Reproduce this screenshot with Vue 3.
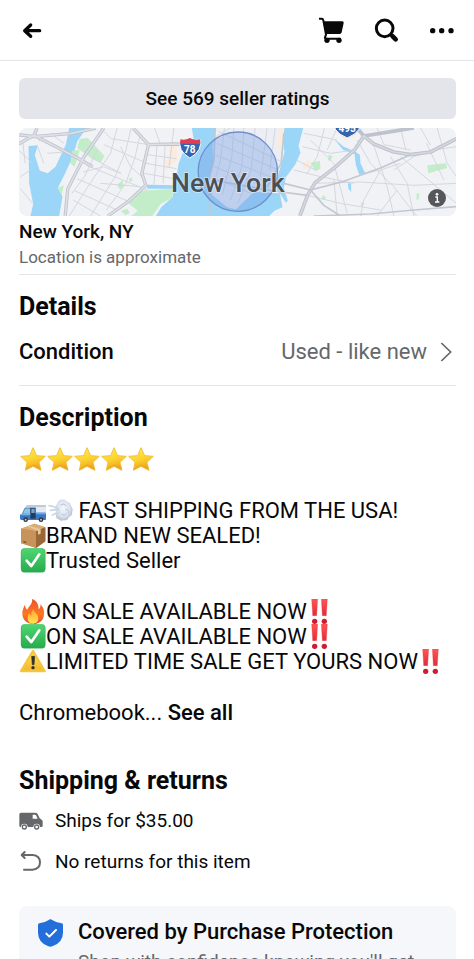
<script setup>
import { ref } from 'vue'

const description = ref([
  [{ before: ['star', 'star', 'star', 'star', 'star'], text: '' }],
  [
    { before: ['truck', 'dash'], text: ' FAST SHIPPING FROM THE USA!' },
    { before: ['package'], text: 'BRAND NEW SEALED!' },
    { before: ['check'], text: 'Trusted Seller' }
  ],
  [
    { before: ['fire'], text: 'ON SALE AVAILABLE NOW', after: ['bang'] },
    { before: ['check'], text: 'ON SALE AVAILABLE NOW', after: ['bang'] },
    { before: ['warning'], text: 'LIMITED TIME SALE GET YOURS NOW', after: ['bang'] }
  ]
])
</script>

<template>
  <div class="screen">
    <!-- emoji sheet -->
    <svg class="sheet" width="0" height="0" aria-hidden="true">
      <defs>
        <linearGradient id="g-star" x1="0" y1="0" x2="0.3" y2="1">
          <stop offset="0" stop-color="#fff05a" /><stop offset="0.6" stop-color="#fcd22f" /><stop offset="1" stop-color="#f0a51e" />
        </linearGradient>
        <linearGradient id="g-check" x1="0" y1="0" x2="0" y2="1">
          <stop offset="0" stop-color="#4fd672" /><stop offset="1" stop-color="#27ab4c" />
        </linearGradient>
        <linearGradient id="g-fire" x1="0" y1="0" x2="0" y2="1">
          <stop offset="0" stop-color="#f0502c" /><stop offset="0.6" stop-color="#fb7a24" /><stop offset="1" stop-color="#ee4a2a" />
        </linearGradient>
        <linearGradient id="g-flame" x1="0" y1="0" x2="0" y2="1">
          <stop offset="0" stop-color="#ffa52d" /><stop offset="1" stop-color="#ffe552" />
        </linearGradient>
        <linearGradient id="g-warn" x1="0" y1="0" x2="0" y2="1">
          <stop offset="0" stop-color="#ffe45a" /><stop offset="1" stop-color="#f4b62c" />
        </linearGradient>
        <linearGradient id="g-bang" x1="0" y1="0" x2="0" y2="1">
          <stop offset="0" stop-color="#ff5555" /><stop offset="1" stop-color="#e02c3a" />
        </linearGradient>
        <radialGradient id="g-dash" cx="0.45" cy="0.4" r="0.6">
          <stop offset="0" stop-color="#f3f6fb" /><stop offset="0.7" stop-color="#d8e0ed" /><stop offset="1" stop-color="#b3bfd3" />
        </radialGradient>
      </defs>
      <symbol id="e-star" viewBox="0 0 81 75">
        <path d="M42 2 53 26 79 28 60 46 66 70 42 58 19 70 24 46 5 28 32 26Z" fill="url(#g-star)" stroke="#f2c23c" stroke-width="3" stroke-linejoin="round" />
        <path d="M19 70 42 58 66 70 63 60 43 52 23 62Z" fill="#e89a22" opacity=".4" />
      </symbol>
      <symbol id="e-truck" viewBox="0 0 81 75">
        <path d="M24 21h54q3 0 3 3v26H18l2-25q1-4 4-4Z" fill="#e3eaf2" />
        <path d="M24 21h54q3 0 3 3v3H20Z" fill="#bccbdc" />
        <path d="M18 30h17v17H10Z" fill="#86c8e8" stroke="#405c7d" stroke-width="2" />
        <path d="M3 50l12-4h66v17q0 3-3 3H7q-4 0-4-5Z" fill="#3978c3" />
        <path d="M3 49l13-4h20v7H4Z" fill="#7bb2e4" />
        <path d="M34 29h16v33H34Z" fill="#263a5b" />
        <path d="M37 32h10v13H37Z" fill="#6aa8d5" />
        <path d="M51 43h29v6H51Z" fill="#6ca7e1" />
        <circle cx="20" cy="65" r="7" fill="#2e3743" /><circle cx="20" cy="65" r="3" fill="#b6c0cb" />
        <circle cx="66" cy="65" r="7" fill="#2e3743" /><circle cx="66" cy="65" r="3" fill="#b6c0cb" />
      </symbol>
      <symbol id="e-dash" viewBox="0 0 81 75">
        <path d="M34 18q3-13 16-13 10 0 14 8 9 1 10 11 8 8 4 18 1 11-9 14-5 13-17 10-7 5-13-2-10-2-8-12-4-5 0-12-6-12 3-22Z" fill="url(#g-dash)" stroke="#b4bfd1" stroke-width="1" />
        <path d="M9 23q14 1 28 9M13 37q12-3 26 0M19 51q9-6 21-6" fill="none" stroke="#ccd6e5" stroke-width="5" stroke-linecap="round" />
        <path d="M45 20q10-6 15 3M59 34q10 0 9 11M48 50q8 5 13-3" fill="none" stroke="#b9c5d8" stroke-width="3" stroke-linecap="round" />
      </symbol>
      <symbol id="e-package" viewBox="0 0 81 75">
        <path d="M6 17 46 2 79 13v42L52 75 6 60Z" fill="#b9834d" />
        <path d="M6 17 46 2 79 13 51 25Z" fill="#dbad76" />
        <path d="M51 25 79 13v42L51 75Z" fill="#9a6838" />
        <path d="M6 17 51 25V75L6 61Z" fill="#c8925b" />
        <path d="M24 10 31 8 65 19v13l-8 3V23Z" fill="#e9c797" />
        <path d="M13 53l9 3v5l-9-3Z" fill="#7a4f29" />
      </symbol>
      <symbol id="e-check" viewBox="0 0 81 75">
        <rect x="6" y="1" width="73" height="72" rx="11" fill="url(#g-check)" stroke="#2ba64d" stroke-width="1" />
        <path d="M23 38 37 54 61 19" fill="none" stroke="#fff" stroke-width="8" stroke-linecap="round" stroke-linejoin="round" />
      </symbol>
      <symbol id="e-fire" viewBox="0 0 81 75">
        <path d="M39 0C55 6 59 18 59 31 64 28 65 21 64 16 76 27 77 41 74 53 70 68 57 75 42 75 25 75 11 64 10 46 9 34 14 26 17 18 20 25 20 29 25 32 29 21 42 15 39 0Z" fill="url(#g-fire)" />
        <path d="M44 30C43 40 57 43 58 57 58 68 51 74 42 74 31 74 25 66 26 57 26 51 29 47 30 43 33 46 34 49 37 50 36 42 39 35 44 30Z" fill="url(#g-flame)" />
      </symbol>
      <symbol id="e-warning" viewBox="0 0 81 75">
        <path d="M42 6 77 66H6Z" fill="url(#g-warn)" stroke="#f5c53e" stroke-width="7" stroke-linejoin="round" />
        <path d="M38 22h9l-2 25h-5Z" fill="#30302e" stroke="#30302e" stroke-width="2" stroke-linejoin="round" />
        <circle cx="42" cy="56" r="5" fill="#30302e" />
      </symbol>
      <symbol id="e-bang" viewBox="0 0 81 75">
        <path d="M14 0h18l-3 50H17ZM43 0h18l-3 50H46Z" fill="url(#g-bang)" stroke="#ef4650" stroke-width="1" stroke-linejoin="round" />
        <circle cx="23" cy="67" r="8" fill="#cf1c30" /><circle cx="52" cy="67" r="8" fill="#cf1c30" />
      </symbol>
    </svg>

    <header class="topbar">
      <button class="icon-btn" aria-label="Back">
        <svg viewBox="0 0 78 78"><path d="M62 41H18M35 24 17 41l18 17" fill="none" stroke="currentColor" stroke-width="10" stroke-linecap="round" stroke-linejoin="round" /></svg>
      </button>
      <div class="actions">
        <button class="icon-btn" aria-label="Cart">
          <svg viewBox="0 0 78 78">
            <path d="M2 5h6q4 0 5 5l8 43-3 8q-1 4 4 4h41" fill="none" stroke="currentColor" stroke-width="6" stroke-linecap="round" stroke-linejoin="round" />
            <path d="M12 13h58q5 0 4 5l-6 28q-1 5-6 5H20Z" fill="currentColor" />
            <circle cx="24" cy="70" r="8" fill="currentColor" /><circle cx="60" cy="70" r="8" fill="currentColor" />
          </svg>
        </button>
        <button class="icon-btn" aria-label="Search">
          <svg viewBox="0 0 78 78">
            <circle cx="32" cy="34" r="25" fill="none" stroke="currentColor" stroke-width="9" />
            <path d="M50 53l5 5" stroke="currentColor" stroke-width="9" />
            <path d="M56 58l9 9" stroke="currentColor" stroke-width="14" stroke-linecap="round" />
          </svg>
        </button>
        <button class="icon-btn" aria-label="More">
          <svg viewBox="0 0 78 78" fill="currentColor"><circle cx="11" cy="41" r="8" /><circle cx="38" cy="41" r="8" /><circle cx="66" cy="41" r="8" /></svg>
        </button>
      </div>
    </header>

    <main class="content">
      <button class="ratings">See 569 seller ratings</button>

      <section class="location">
        <div class="map">
          <svg viewBox="54 24 1314 264" preserveAspectRatio="xMidYMid slice" role="img" aria-label="Map of New York">
            <rect x="54" y="24" width="1314" height="264" fill="#f1f2f6" />
            <!-- water -->
            <g fill="#9bd5f7">
              <path d="M84 78 112 76 103 106 118 152 142 160 165 140 196 74 206 24H258L231 62 214 116 194 160 172 204 186 230 176 288H90L98 252 86 190Z" />
              <path d="M574 24H648L636 80 640 132 622 192 634 216 700 256 760 216 838 220 846 262 822 272 806 288H466L482 262 516 232 522 206 440 206 440 194 524 196 534 132 546 100 584 90Z" />
              <path d="M842 24H908L894 78 900 98 884 134 856 172 850 204 862 242 856 248 838 220 822 200 840 140 852 96Z" />
              <path d="M1000 56 1030 80 1062 94 1078 104 1080 130 1094 160 1076 164 1066 134 1062 102 1028 90ZM1042 190l10 0 0 26-8-10Z" />
            </g>
            <path d="M622 192 640 130 640 80 648 24H842L850 90 836 150 806 204 760 216 706 268 680 262 636 226Z" fill="#eceef4" />
            <!-- parks and blocks -->
            <g fill="#c3ecc8">
              <path d="M238 56 262 54 312 108 300 128 270 112 230 84Z" />
              <path d="M418 212 522 206 514 234 480 252 456 288H392L412 272 386 252 400 226Z" />
              <path d="M214 92 238 90 222 140 210 130ZM170 204l20-8-6 28ZM362 272l18-6 8 12-14 8Z" />
              <path d="M350 194l16-14 4 20-12 8ZM384 178l10-6 2 10-8 4Z" />
              <path d="M930 128 958 122 960 146 944 154ZM984 104l12 4-6 16-8-4ZM1280 136 1336 130 1340 144 1310 152 1284 160ZM1248 222l8-4 0 18-8 4ZM966 226l10 4-2 8-10-2ZM1084 246l8 4-8 10-4-4Z" />
            </g>
            <path d="M506 72h24v50l-36 28-6-24 16-8ZM838 24h14l-10 70-12-22ZM906 130l20-12 6 20-24 14ZM1016 40l44-10 4 22-32 6Z" fill="#faebdc" />
            <!-- minor streets -->
            <g fill="none" stroke="#d3d7df" stroke-width="3">
              <path d="M258 136 440 210M230 176 392 248M310 74 440 130M270 112 362 160M222 212 350 270M300 24 332 56 444 74M218 240 300 288M350 24 330 100 262 200 206 288M392 24 376 92 344 170 270 288M420 40 404 110 376 190 318 270M290 90 252 170 214 220M440 104 528 116M436 130 528 146M430 160 520 176M470 74 460 196M494 70 488 190M520 24 506 140M462 24 480 74M360 80 390 140 424 170M248 156 310 140 360 160M300 190 420 200" />
              <path d="M54 90 96 130M60 206 96 250M110 76 130 130M140 100 190 96M60 170 90 150M150 40 190 70M66 60 74 130M102 30 118 64" />
              <path d="M654 34 700 56 840 124M648 70 834 150M642 104 824 176M640 140 806 204M634 172 752 220M672 24 660 120 638 200M700 24 694 110 666 224M730 24 724 140 690 240M764 24 752 150 712 250M800 24 780 170M824 24 808 150M646 50 690 24M656 188 698 150" />
              <path d="M906 80 990 100 1064 90M880 150 960 170 1060 190M930 60 1000 130 1040 280M972 24 950 110 920 160M1010 24 980 90M1070 60 1110 130 1180 200 1248 288M1120 76 1160 200 1180 288M1170 110 1220 190 1240 288M1200 110 1368 250M1278 70 1330 180M1180 150 1240 110 1300 90 1368 80M940 190 1080 186 1240 196 1368 190M920 226 1020 250 1140 270M1000 176 1010 288M1094 160 1140 150 1200 130M1130 24 1150 74 1230 90M1200 24 1216 90M1260 24 1290 76M1310 24 1340 130 1368 170M1140 150 1090 240 1080 288M1190 210 1130 288M910 40 1010 60M888 120 944 150" />
            </g>
            <!-- main roads -->
            <g fill="none" stroke-linejoin="round">
              <path d="M54 44 102 50 212 40 286 24M54 72 100 46 110 24M100 46 220 108 276 140M310 24 252 108 202 206 194 288M398 24 444 74 526 72 576 76M444 74 424 160 436 196 384 244 322 288" stroke="#bdc2cc" stroke-width="10" />
              <path d="M54 44 102 50 212 40 286 24M54 72 100 46 110 24M100 46 220 108 276 140M310 24 252 108 202 206 194 288M398 24 444 74 526 72 576 76M444 74 424 160 436 196 384 244 322 288" stroke="#dde0e6" stroke-width="5" />
              <path d="M898 288 922 224 944 188 1006 140 1064 88 1090 48 1120 72 1180 96 1230 104 1290 96 1368 56M1090 48 1190 32 1240 24M1090 48 1070 24" stroke="#bdc2cc" stroke-width="11" />
              <path d="M898 288 922 224 944 188 1006 140 1064 88 1090 48 1120 72 1180 96 1230 104 1290 96 1368 56" stroke="#d4d8df" stroke-width="5" />
              <path d="M850 190 930 210 1030 184 1140 144 1230 104M940 288 1110 282 1240 270 1368 260M930 210 970 256 1020 288M644 24 640 120 622 190 632 288M850 40 842 130 800 200M636 180 800 210 920 226" stroke="#c2c8d1" stroke-width="5" />
            </g>
            <circle cx="712" cy="155" r="119" fill="#6e9be6" fill-opacity=".36" stroke="#6e8fc9" stroke-width="4" />
            <!-- interstate shields -->
            <g>
              <path d="M540 58q14 4 28-4 14 8 30 4 10 34-30 56-38-22-28-56Z" fill="#3565ae" stroke="#fff" stroke-width="3" />
              <path d="M540 58q14 4 28-4 14 8 30 4l2 13H538Z" fill="#df3f55" />
              <text x="568" y="98" class="shield">78</text>
              <path d="M1001 -6H1079Q1090 34 1040 54 990 34 1001 -6Z" fill="#3565ae" stroke="#fff" stroke-width="3" />
              <text x="1040" y="36" class="shield">495</text>
            </g>
            <text x="682" y="215" class="city">New York</text>
          </svg>
          <button class="info" aria-label="Map information">
            <svg viewBox="0 0 54 54"><circle cx="27" cy="27" r="27" fill="#55575b" /><circle cx="27" cy="16" r="4" fill="#fff" /><path d="M22 24h6v15M21 39h13" fill="none" stroke="#fff" stroke-width="4" /></svg>
          </button>
        </div>
        <p class="place">New York, NY</p>
        <p class="note">Location is approximate</p>
      </section>

      <section class="details">
        <h2>Details</h2>
        <a class="condition" href="#condition">
          <span class="label">Condition</span>
          <span class="value">Used - like new</span>
          <svg class="chevron" viewBox="0 0 36 60"><path d="M4 3l28 27L4 57" fill="none" stroke="currentColor" stroke-width="5" /></svg>
        </a>
      </section>

      <section class="description">
        <h2>Description</h2>
        <div class="copy">
          <p v-for="(lines, i) in description" :key="i">
            <span v-for="(line, j) in lines" :key="j" class="line"><svg v-for="(name, k) in line.before" :key="k" class="emoji" role="img" :aria-label="name"><use :href="'#e-' + name" /></svg>{{ line.text }}<svg v-for="name in line.after" :key="name" class="emoji" role="img" :aria-label="name"><use :href="'#e-' + name" /></svg></span>
          </p>
          <p>Chromebook... <a class="see-all" href="#all">See all</a></p>
        </div>
      </section>

      <section class="shipping">
        <h2>Shipping &amp; returns</h2>
        <ul>
          <li>
            <svg viewBox="0 0 72 72" fill="#65676b">
              <path fill-rule="evenodd" d="M6 11h42q5 0 8 4l6 13 7 5q2 2 2 5v12q0 4-4 4h-4a10 10 0 0 0-20 0H26a10 10 0 0 0-20 0H5q-4 0-4-4V16q0-5 5-5Zm35 6v12h15l-5-10q-1-2-3-2Z" />
              <circle cx="16" cy="54" r="8" /><circle cx="53" cy="54" r="8" />
              <circle cx="16" cy="54" r="4" fill="#fff" /><circle cx="53" cy="54" r="4" fill="#fff" />
            </svg>
            Ships for $35.00
          </li>
          <li>
            <svg viewBox="0 0 72 72"><path d="M17 6 8 15l9 9M9 15h32q22 2 22 22t-22 22H15" fill="none" stroke="#65676b" stroke-width="6" stroke-linecap="round" stroke-linejoin="round" /></svg>
            No returns for this item
          </li>
        </ul>
      </section>

      <section class="protection">
        <svg class="badge" viewBox="0 0 75 84">
          <path d="M37 1q3 0 7 3 12 8 27 9 4 1 4 5v23q0 29-32 41-6 2-12 0Q0 70 0 41V18q0-4 4-5 15-1 27-9 3-3 6-3Z" fill="#226fdc" />
          <path d="M25 44l9 9 20-20" fill="none" stroke="#fff" stroke-width="6" stroke-linecap="round" stroke-linejoin="round" />
        </svg>
        <div>
          <h3>Covered by Purchase Protection</h3>
          <p>Shop with confidence knowing you'll get</p>
        </div>
      </section>
    </main>
  </div>
</template>

<style>
body { background: #fff; }
</style>

<style scoped>
.screen {
  height: 100vh; display: flex; flex-direction: column; overflow: hidden;
  background: #fff; color: #080809; font-family: Roboto, "Liberation Sans", sans-serif;
}
.sheet { position: absolute; }
h2, h3, p, ul { margin: 0; padding: 0; }
button { border: none; padding: 0; background: none; color: inherit; font-family: inherit; cursor: pointer; }
a { color: inherit; text-decoration: none; }

.topbar {
  flex: none; height: 60px; padding: 0 19px; border-bottom: 1px solid #e4e5e8;
  display: flex; justify-content: space-between; align-items: center;
}
.actions { display: flex; gap: 29px; }
.icon-btn { width: 26px; height: 26px; }
.icon-btn svg { display: block; width: 100%; height: 100%; }

.content { flex: 1; min-height: 0; padding: 17px 18px 0 19px; overflow-y: auto; scrollbar-width: none; }
.ratings {
  display: block; width: 100%; height: 41px; border-radius: 6px;
  background: #e4e5eb; font-size: 19px; font-weight: 500;
}

.location { margin-top: 9px; padding-bottom: 4px; border-bottom: 1px solid #e4e5e8; }
.map { position: relative; height: 88px; border-radius: 8px; overflow: hidden; }
.map > svg { display: block; width: 100%; height: 100%; }
.shield { fill: #fff; font-size: 30px; font-weight: 700; text-anchor: middle; }
.city {
  fill: #4b4f56; font-size: 80px; font-weight: 500; text-anchor: middle;
  stroke: #fff; stroke-opacity: 0.5; stroke-width: 5px; paint-order: stroke;
}
.info { position: absolute; right: 10px; bottom: 9px; width: 18px; height: 18px; }
.info svg { display: block; }
.place { margin-top: 4px; font-size: 19px; line-height: 24px; font-weight: 500; }
.note { color: #65676b; font-size: 17px; line-height: 26px; }

h2 { margin-top: 16px; font-size: 25px; line-height: 32px; font-weight: 700; }
.details { padding-bottom: 19px; border-bottom: 1px solid #e4e5e8; }
.condition { display: flex; align-items: center; margin-top: 15px; font-size: 22px; line-height: 28px; }
.label { flex: 1; font-weight: 500; }
.value { color: #65676b; }
.chevron { width: 12px; height: 20px; margin: 0 4px 0 13px; color: #65676b; }

.copy { display: flex; flex-direction: column; gap: 26px; margin-top: 13px; font-size: 22px; line-height: 25px; }
.line { display: block; min-height: 25px; white-space: pre-wrap; }
.emoji { width: 27px; height: 25px; vertical-align: top; }
.see-all { font-weight: 500; }

.shipping h2 { margin-top: 40px; }
.shipping ul { display: flex; flex-direction: column; gap: 17px; margin-top: 12px; list-style: none; }
.shipping li { display: flex; align-items: center; gap: 12px; font-size: 19px; line-height: 24px; }
.shipping li svg { width: 24px; height: 24px; }

.protection {
  display: flex; align-items: flex-start; gap: 15px; margin-top: 32px; padding: 12px 19px;
  border-radius: 8px; background: #f6f7fa;
}
.badge { flex: none; width: 25px; height: 28px; margin-top: 1px; }
.protection h3 { font-size: 22px; line-height: 28px; font-weight: 500; }
.protection p { margin-top: 4px; color: #65676b; font-size: 19px; line-height: 24px; }
</style>
